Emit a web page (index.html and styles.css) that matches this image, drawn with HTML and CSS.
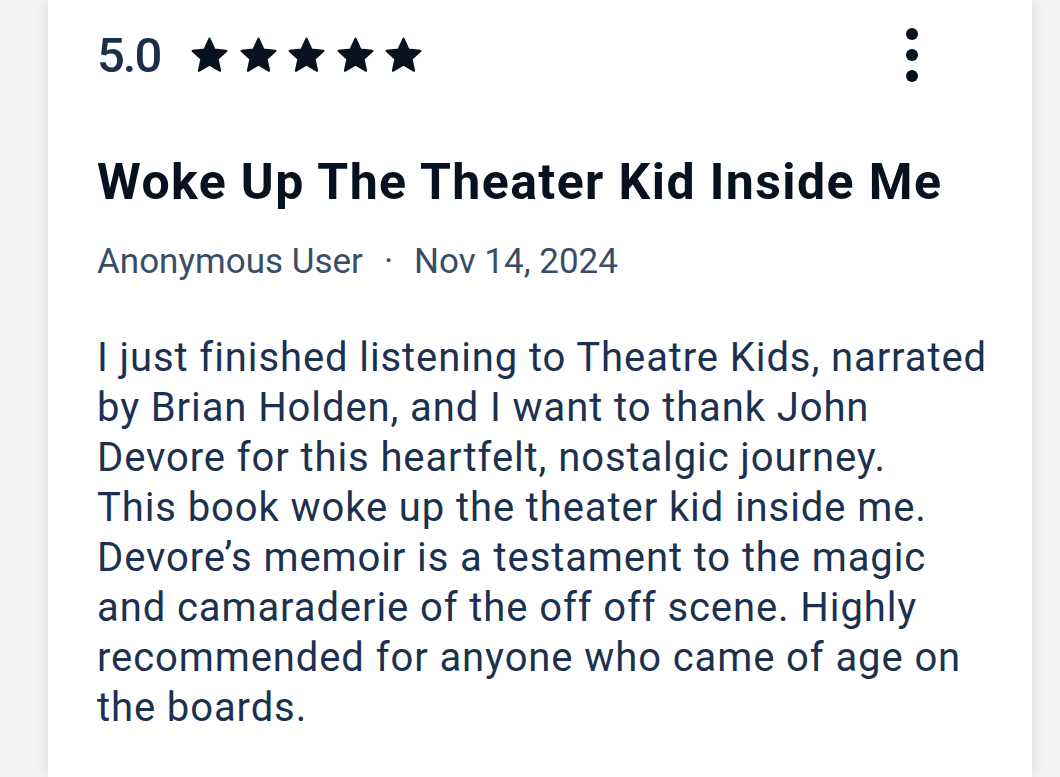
FILE: index.html
```html
<!DOCTYPE html>
<html>
<head>
<meta charset="utf-8">
<link rel="stylesheet" href="styles.css">
</head>
<body>
<div class="page">
  <div class="card">
    <div class="top">
      <div class="rating">
        <span class="score">5.0</span>
        <div class="stars">
          <svg viewBox="0 0 24 24" class="star"><path d="M12 2.6l2.8 6.1 6.6.7-4.9 4.5 1.4 6.6L12 17.1l-5.9 3.4 1.4-6.6-4.9-4.5 6.6-.7z"/></svg>
          <svg viewBox="0 0 24 24" class="star"><path d="M12 2.6l2.8 6.1 6.6.7-4.9 4.5 1.4 6.6L12 17.1l-5.9 3.4 1.4-6.6-4.9-4.5 6.6-.7z"/></svg>
          <svg viewBox="0 0 24 24" class="star"><path d="M12 2.6l2.8 6.1 6.6.7-4.9 4.5 1.4 6.6L12 17.1l-5.9 3.4 1.4-6.6-4.9-4.5 6.6-.7z"/></svg>
          <svg viewBox="0 0 24 24" class="star"><path d="M12 2.6l2.8 6.1 6.6.7-4.9 4.5 1.4 6.6L12 17.1l-5.9 3.4 1.4-6.6-4.9-4.5 6.6-.7z"/></svg>
          <svg viewBox="0 0 24 24" class="star"><path d="M12 2.6l2.8 6.1 6.6.7-4.9 4.5 1.4 6.6L12 17.1l-5.9 3.4 1.4-6.6-4.9-4.5 6.6-.7z"/></svg>
        </div>
      </div>
      <div class="more">
        <span class="dot"></span><span class="dot"></span><span class="dot"></span>
      </div>
    </div>
    <h1 class="title">Woke Up The Theater Kid Inside Me</h1>
    <div class="meta">Anonymous User<span class="sep">·</span>Nov 14, 2024</div>
    <p class="body">I just finished listening to Theatre Kids, narrated<br>by Brian Holden, and I want to thank John<br>Devore for this heartfelt, nostalgic journey.<br>This book woke up the theater kid inside me.<br>Devore’s memoir is a testament to the magic<br>and camaraderie of the off off scene. Highly<br>recommended for anyone who came of age on<br>the boards.</p>
  </div>
</div>
</body>
</html>
```
FILE: styles.css
```css
html, body {
  margin: 0;
  padding: 0;
  background: #f3f3f3;
  height: 777px;
  overflow: hidden;
}
.page {
  padding: 0 28px 0 48px;
}
.card {
  background: #ffffff;
  height: 777px;
  box-shadow: 0 0 14px rgba(0,0,0,0.10);
  padding: 24px 0 0 49px;
  box-sizing: border-box;
  font-family: Roboto, "Noto Sans", sans-serif;
}
.top {
  display: flex;
  justify-content: space-between;
  align-items: center;
  padding-right: 114px;
  height: 62px;
}
.rating {
  display: flex;
  align-items: center;
  gap: 28px;
}
.score {
  font-size: 49px;
  font-weight: 500;
  color: #1b2f4a;
  letter-spacing: -2px;
}
.stars {
  display: flex;
  gap: 5.5px;
}
.star {
  width: 43px;
  height: 43px;
  fill: #07111f;
  stroke: #07111f;
  stroke-width: 1.2;
  stroke-linejoin: round;
}
.more {
  display: flex;
  flex-direction: column;
  gap: 9px;
}
.dot {
  width: 12px;
  height: 12px;
  border-radius: 50%;
  background: #07111f;
}
.title {
  margin: 66px 0 0 0;
  font-size: 50px;
  font-weight: 700;
  color: #07111f;
  line-height: 60px;
  letter-spacing: 1.4px;
}
.meta {
  margin-top: 30px;
  font-size: 35px;
  color: #3a4d66;
  line-height: 40px;
  letter-spacing: 0;
}
.sep {
  margin: 0 21px;
}
.body {
  margin: 51px 0 0 0;
  font-size: 40px;
  line-height: 50px;
  color: #1c3150;
  letter-spacing: 0.9px;
}
```
